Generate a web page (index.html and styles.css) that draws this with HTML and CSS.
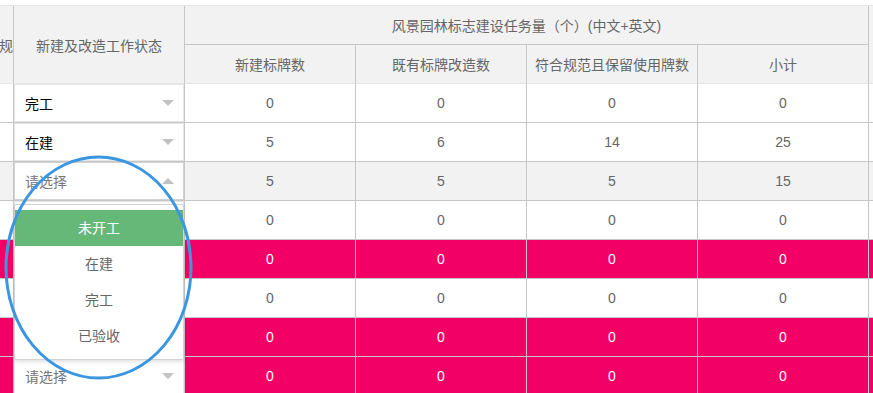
FILE: index.html
```html
<!DOCTYPE html>
<html lang="zh-CN">
<head>
<meta charset="utf-8">
<title>风景园林标志建设任务量</title>
<link rel="stylesheet" href="styles.css">
</head>
<body>
<div class="view">
  <div class="grid">
    <div class="th span-r2 prev">是否符合规</div>
    <div class="th span-r2">新建及改造工作状态</div>
    <div class="th span-c4 group">风景园林标志建设任务量（个）(中文+英文)</div>
    <div class="th span-r2 tail"></div>
    <div class="th sub">新建标牌数</div>
    <div class="th sub">既有标牌改造数</div>
    <div class="th sub">符合规范且保留使用牌数</div>
    <div class="th sub">小计</div>

    <div class="tr">
      <div class="td"></div>
      <div class="td st"><div class="sel"><span class="val">完工</span><i class="arrow"></i></div></div>
      <div class="td">0</div><div class="td">0</div><div class="td">0</div><div class="td">0</div>
      <div class="td"></div>
    </div>
    <div class="tr">
      <div class="td"></div>
      <div class="td st"><div class="sel"><span class="val">在建</span><i class="arrow"></i></div></div>
      <div class="td">5</div><div class="td">6</div><div class="td">14</div><div class="td">25</div>
      <div class="td"></div>
    </div>
    <div class="tr hover">
      <div class="td"></div>
      <div class="td st">
        <div class="sel open"><span class="ph">请选择</span><i class="arrow"></i>
          <dl class="menu">
            <dd class="this">未开工</dd>
            <dd>在建</dd>
            <dd>完工</dd>
            <dd>已验收</dd>
          </dl>
        </div>
      </div>
      <div class="td">5</div><div class="td">5</div><div class="td">5</div><div class="td">15</div>
      <div class="td"></div>
    </div>
    <div class="tr">
      <div class="td"></div>
      <div class="td st"><div class="sel"><span class="ph">请选择</span><i class="arrow"></i></div></div>
      <div class="td">0</div><div class="td">0</div><div class="td">0</div><div class="td">0</div>
      <div class="td"></div>
    </div>
    <div class="tr pink">
      <div class="td"></div>
      <div class="td st"><div class="sel"><span class="ph">请选择</span><i class="arrow"></i></div></div>
      <div class="td">0</div><div class="td">0</div><div class="td">0</div><div class="td">0</div>
      <div class="td"></div>
    </div>
    <div class="tr">
      <div class="td"></div>
      <div class="td st"><div class="sel"><span class="ph">请选择</span><i class="arrow"></i></div></div>
      <div class="td">0</div><div class="td">0</div><div class="td">0</div><div class="td">0</div>
      <div class="td"></div>
    </div>
    <div class="tr pink">
      <div class="td"></div>
      <div class="td st"><div class="sel"><span class="ph">请选择</span><i class="arrow"></i></div></div>
      <div class="td">0</div><div class="td">0</div><div class="td">0</div><div class="td">0</div>
      <div class="td"></div>
    </div>
    <div class="tr pink">
      <div class="td"></div>
      <div class="td st"><div class="sel"><span class="ph">请选择</span><i class="arrow"></i></div></div>
      <div class="td">0</div><div class="td">0</div><div class="td">0</div><div class="td">0</div>
      <div class="td"></div>
    </div>
  </div>
  <svg class="ring" width="190" height="226" viewBox="0 0 190 226">
    <ellipse cx="94.5" cy="112.5" rx="92.5" ry="110.5" fill="none" stroke="#3b96e2" stroke-width="3"/>
  </svg>
</div>
</body>
</html>
```

FILE: styles.css
```css
html, body {
  margin: 0;
  padding: 0;
  background: #fff;
}

body {
  font-family: "Liberation Sans", "Noto Sans CJK SC", sans-serif;
  font-size: 14px;
  color: #666;
}

.view {
  position: relative;
  width: 873px;
  height: 393px;
  overflow: hidden;
  padding-top: 5px;
  box-sizing: border-box;
}

.grid {
  display: grid;
  grid-template-columns: repeat(7, 171px);
  grid-auto-rows: 39px;
  margin-left: -157px;
  width: max-content;
  border-top: 1px solid #e6e6e6;
}

.tr {
  display: contents;
}

.th,
.td {
  box-sizing: border-box;
  border-right: 1px solid #c6c6c6;
  border-bottom: 1px solid #c6c6c6;
  display: flex;
  align-items: center;
  justify-content: center;
  white-space: nowrap;
  overflow: hidden;
}

.th {
  background: #f2f2f2;
  color: #666;
}

.span-r2 {
  grid-row: span 2;
  border-bottom-color: #e6e6e6;
}

.span-c4 {
  grid-column: span 4;
}

.sub {
  border-bottom-color: #e6e6e6;
}

.prev {
  justify-content: flex-end;
}

.td {
  background: #fff;
  color: #666;
}

.tr.hover .td {
  background: #f2f2f2;
}

.tr.pink .td {
  background: #f30067;
  color: #fff;
}

.td.st {
  overflow: visible;
  position: relative;
  align-items: stretch;
  justify-content: stretch;
}

.tr.hover .td.st {
  z-index: 5;
}

.sel {
  position: relative;
  flex: 1;
  box-sizing: border-box;
  border: 1px solid #e6e6e6;
  background: #fff;
  padding-left: 10px;
  display: flex;
  align-items: center;
}

.sel.open {
  border-color: #d2d2d2;
}

.val {
  color: #000;
}

.ph {
  color: #777;
}

.arrow {
  position: absolute;
  right: 9px;
  top: 50%;
  margin-top: -3px;
  width: 0;
  height: 0;
  border-style: solid;
  border-width: 6px;
  border-color: #c2c2c2 transparent transparent transparent;
}

.sel.open .arrow {
  margin-top: -9px;
  border-color: transparent transparent #c2c2c2 transparent;
}

.menu {
  position: absolute;
  left: -1px;
  top: 41px;
  width: 170px;
  margin: 0;
  padding: 5px 0;
  box-sizing: border-box;
  background: #fff;
  border: 1px solid #d2d2d2;
  border-radius: 2px;
  box-shadow: 0 2px 4px rgba(0, 0, 0, 0.12);
}

.menu dd {
  margin: 0;
  padding: 0 10px;
  line-height: 36px;
  text-align: center;
  color: #666;
}

.menu dd.this {
  background: #66b878;
  color: #fff;
}

.ring {
  position: absolute;
  left: 4px;
  top: 155px;
  z-index: 10;
}
```
